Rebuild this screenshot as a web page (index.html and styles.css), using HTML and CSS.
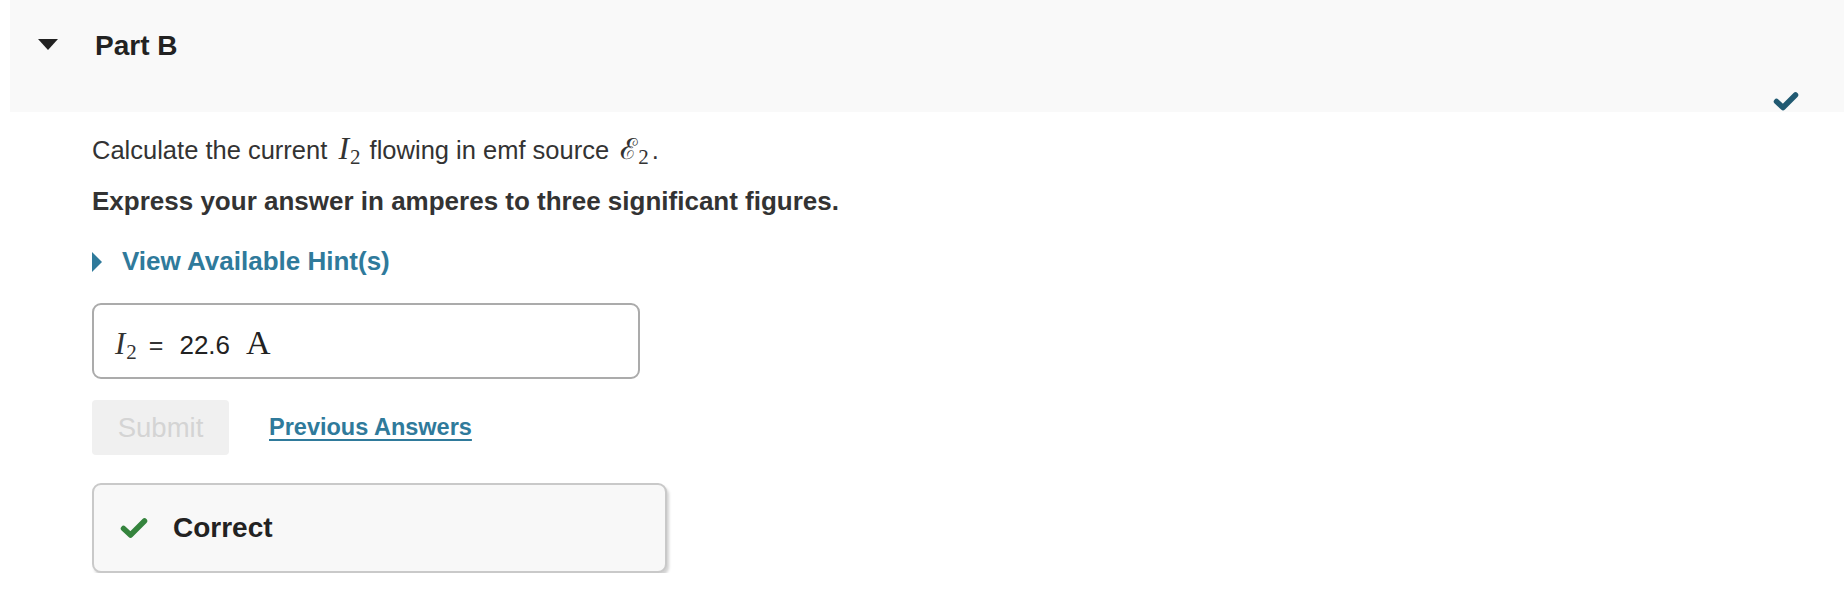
FILE: index.html
```html
<!DOCTYPE html>
<html>
<head>
<meta charset="utf-8">
<link rel="stylesheet" href="styles.css">
</head>
<body>
<div class="part">
  <div class="part-header">
    <span class="caret-down"></span>
    <h2 class="part-title">Part B</h2>
    <svg class="status-check" width="26" height="21" viewBox="0 0 26 21"><polyline points="3.5,10.5 10,16.5 22.5,4" fill="none" stroke="#215a72" stroke-width="5.5" stroke-linecap="round" stroke-linejoin="round"/></svg>
  </div>
  <div class="part-body">
    <p class="question">Calculate the current <span class="mi">I</span><sub class="msub">2</sub> flowing in emf source <span class="mcal">ℰ</span><sub class="msub">2</sub><span class="dot">.</span></p>
    <p class="instruction">Express your answer in amperes to three significant figures.</p>
    <div class="hint-row">
      <span class="caret-right"></span>
      <span class="hint-link">View Available Hint(s)</span>
    </div>
    <div class="answer-box">
      <span class="mi big">I</span><sub class="msub big-sub">2</sub>
      <span class="eq">=</span>
      <span class="value">22.6</span>
      <span class="unit">A</span>
    </div>
    <div class="actions">
      <button class="submit" disabled>Submit</button>
      <a class="prev-link" href="#">Previous Answers</a>
    </div>
    <div class="feedback">
      <svg class="ok-check" width="28" height="22" viewBox="0 0 28 22"><polyline points="3.5,11.5 10.5,18 24.5,4" fill="none" stroke="#35843d" stroke-width="5.5" stroke-linecap="round" stroke-linejoin="round"/></svg>
      <span class="feedback-text">Correct</span>
    </div>
  </div>
</div>
</body>
</html>
```

FILE: styles.css
```css
html, body {
  margin: 0;
  padding: 0;
  background: #ffffff;
}
body {
  font-family: "Liberation Sans", Arial, Helvetica, sans-serif;
  color: #333333;
}
.part {
  margin-left: 10px;
}
.part-header {
  position: relative;
  height: 112px;
  box-sizing: border-box;
  background: #f9f9f9;
  display: flex;
  align-items: flex-start;
  padding: 30px 0 0 28px;
}
.caret-down {
  width: 0;
  height: 0;
  margin-top: 9px;
  border-left: 10.5px solid transparent;
  border-right: 10.5px solid transparent;
  border-top: 11px solid #222222;
}
.part-title {
  margin: 0 0 0 37px;
  font-size: 28px;
  line-height: 32px;
  font-weight: bold;
  color: #222222;
}
.status-check {
  position: absolute;
  right: 45px;
  top: 91px;
}
.part-body {
  padding: 20px 0 0 82px;
}
.question {
  margin: 0;
  font-size: 25.5px;
  line-height: 36px;
}
.mi {
  font-family: "Liberation Serif", "Times New Roman", serif;
  font-style: italic;
  font-size: 32px;
  line-height: 0;
  margin-left: 4px;
}
.mcal {
  font-family: "DejaVu Serif", serif;
  font-size: 29px;
  line-height: 0;
  margin-left: 4px;
}
.msub {
  font-family: "Liberation Serif", "Times New Roman", serif;
  font-size: 21px;
  line-height: 0;
  vertical-align: -5px;
  margin-left: 1px;
  margin-right: 2px;
}
.dot {
  margin-left: 1px;
}
.instruction {
  margin: 15px 0 0 0;
  font-size: 26px;
  line-height: 36px;
  font-weight: bold;
}
.hint-row {
  margin-top: 24px;
  display: flex;
  align-items: center;
  height: 36px;
}
.caret-right {
  width: 0;
  height: 0;
  border-top: 10.5px solid transparent;
  border-bottom: 10.5px solid transparent;
  border-left: 10px solid #2f7a9b;
  margin-top: 2px;
}
.hint-link {
  margin-left: 20px;
  font-size: 26px;
  font-weight: bold;
  color: #2f7a9b;
  line-height: 36px;
}
.answer-box {
  margin-top: 24px;
  width: 548px;
  height: 76px;
  box-sizing: border-box;
  border: 2px solid #ababab;
  border-radius: 9px;
  padding: 20px 0 0 21px;
  display: flex;
  align-items: baseline;
  line-height: 36px;
}
.mi.big {
  font-size: 31px;
  line-height: 36px;
  margin-left: 0;
}
.msub.big-sub {
  font-size: 21px;
  line-height: 20px;
  margin-left: 1px;
  margin-right: 0;
  position: relative;
  top: 5px;
  vertical-align: baseline;
}
.eq {
  font-size: 25px;
  margin-left: 12px;
}
.value {
  font-size: 26px;
  margin-left: 16px;
  color: #222222;
}
.unit {
  font-family: "Liberation Serif", "Times New Roman", serif;
  font-size: 34px;
  margin-left: 16px;
  color: #222222;
}
.actions {
  margin-top: 21px;
  display: flex;
  align-items: center;
}
.submit {
  width: 137px;
  height: 55px;
  border: none;
  border-radius: 4px;
  background: #f0f0f0;
  color: #d4d4d4;
  font-family: "Liberation Sans", Arial, sans-serif;
  font-size: 27.5px;
  padding: 0;
}
.prev-link {
  margin-left: 40px;
  font-size: 23.5px;
  font-weight: bold;
  color: #2f7a9b;
  text-decoration: underline;
  text-decoration-thickness: 2px;
  text-underline-offset: 4px;
}
.feedback {
  margin-top: 28px;
  width: 575px;
  height: 90px;
  box-sizing: border-box;
  background: #f8f8f8;
  border: 2px solid #c9c9c9;
  border-radius: 9px;
  box-shadow: 2px 3px 3px rgba(0, 0, 0, 0.18);
  display: flex;
  align-items: center;
  padding-left: 26px;
}
.feedback-text {
  margin-left: 25px;
  font-size: 28px;
  font-weight: bold;
  color: #222222;
}
```
